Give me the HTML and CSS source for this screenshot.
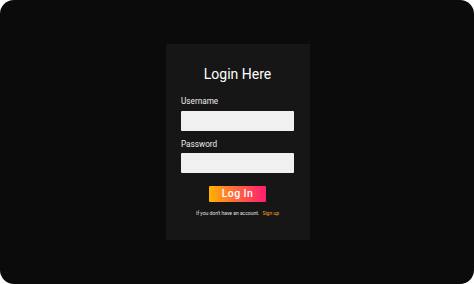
FILE: index.html
```html
<!DOCTYPE html>
<html lang="en">
<head>
<meta charset="utf-8">
<title>Login</title>
<link rel="stylesheet" href="styles.css">
</head>
<body>
<div class="frame">
  <form class="card">
    <h1 class="title">Login Here</h1>
    <label class="label label-first" for="u">Username</label>
    <input class="field" id="u" type="text">
    <label class="label label-second" for="p">Password</label>
    <input class="field" id="p" type="password">
    <button class="btn" type="button">Log In</button>
    <p class="note">If you don't have an account. <a class="link" href="#">Sign up</a></p>
  </form>
</div>
</body>
</html>
```

FILE: styles.css
```css
html, body {
  margin: 0;
  padding: 0;
  background: #ffffff;
}
.frame {
  width: 474px;
  height: 284px;
  background: #0b0b0b;
  border-radius: 14px;
  display: flex;
  justify-content: center;
  align-items: center;
  font-family: Roboto, "Noto Sans", sans-serif;
}
.card {
  box-sizing: border-box;
  width: 144px;
  height: 196px;
  margin-left: 2px;
  background: #161616;
  padding: 22px 16px 0 15px;
  display: flex;
  flex-direction: column;
}
.title {
  margin: 0;
  font-size: 14px;
  line-height: 16px;
  font-weight: 400;
  color: #ffffff;
  text-align: center;
}
.label {
  font-size: 8.2px;
  line-height: 12px;
  color: #ededed;
}
.label-first { margin-top: 13px; }
.label-second { margin-top: 7px; }
.field {
  box-sizing: border-box;
  width: 113px;
  height: 20px;
  margin: 4px 0 0 0;
  border: none;
  border-radius: 1px;
  background: #f0f0f0;
  padding: 0;
}
.label-second + .field { margin-top: 3px; }
.btn {
  align-self: center;
  width: 57px;
  height: 16px;
  margin-top: 13px;
  border: none;
  border-radius: 1px;
  padding: 0;
  background: linear-gradient(90deg, #ffb300 0%, #ff6a3d 45%, #ff1f6e 100%);
  color: #ffffff;
  font-family: Roboto, "Noto Sans", sans-serif;
  font-size: 10.5px;
  font-weight: 500;
  line-height: 16px;
  letter-spacing: 0.4px;
}
.note {
  margin: 7px 0 0 0;
  font-size: 5px;
  line-height: 8px;
  color: #e0e0e0;
  text-align: center;
}
.link {
  color: #f5a623;
  text-decoration: none;
  margin-left: 2px;
}
```
